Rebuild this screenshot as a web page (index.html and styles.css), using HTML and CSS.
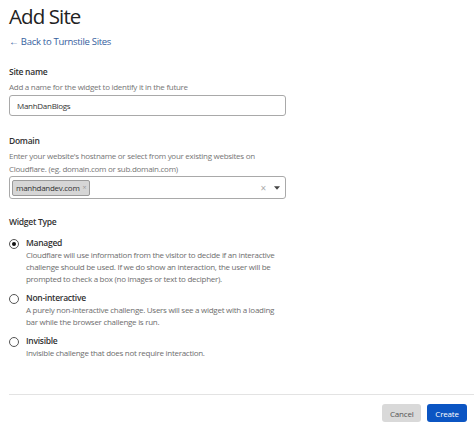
FILE: index.html
```html
<!DOCTYPE html>
<html>
<head>
<meta charset="utf-8">
<link rel="stylesheet" href="styles.css">
</head>
<body>
<div class="page">
  <h1 class="title">Add Site</h1>
  <a class="back" href="#"><span class="arrow">&larr;</span> Back to Turnstile Sites</a>

  <div class="field field-name">
    <div class="label">Site name</div>
    <div class="help">Add a name for the widget to identify it in the future</div>
    <div class="input">ManhDanBlogs</div>
  </div>

  <div class="field field-domain">
    <div class="label">Domain</div>
    <div class="help">Enter your website's hostname or select from your existing websites on<br>Cloudflare. (eg. domain.com or sub.domain.com)</div>
    <div class="select">
      <span class="tag">manhdandev.com <span class="tag-x">&times;</span></span>
      <span class="spacer"></span>
      <span class="clear">&times;</span>
      <svg class="caret" width="6" height="4" viewBox="0 0 6 4"><path d="M0 0.3 L6 0.3 L3 3.7 Z" fill="#444"/></svg>
    </div>
  </div>

  <div class="field field-type">
    <div class="label">Widget Type</div>
    <div class="option">
      <span class="radio checked"></span>
      <div class="opt-body">
        <div class="opt-title">Managed</div>
        <div class="opt-desc">Cloudflare will use information from the visitor to decide if an interactive<br>challenge should be used. If we do show an interaction, the user will be<br>prompted to check a box (no images or text to decipher).</div>
      </div>
    </div>
    <div class="option">
      <span class="radio"></span>
      <div class="opt-body">
        <div class="opt-title">Non-interactive</div>
        <div class="opt-desc">A purely non-interactive challenge. Users will see a widget with a loading<br>bar while the browser challenge is run.</div>
      </div>
    </div>
    <div class="option">
      <span class="radio"></span>
      <div class="opt-body">
        <div class="opt-title">Invisible</div>
        <div class="opt-desc">Invisible challenge that does not require interaction.</div>
      </div>
    </div>
  </div>

  <div class="footer">
    <button class="btn cancel">Cancel</button>
    <button class="btn create">Create</button>
  </div>
</div>
</body>
</html>
```

FILE: styles.css
```css
html, body {
  margin: 0;
  padding: 0;
  background: #ffffff;
}
body {
  font-family: "Open Sans", "Noto Sans", sans-serif;
  color: #313131;
  font-size: 8px;
  letter-spacing: -0.28px;
}
.page {
  padding: 0 0 0 9px;
}
.title {
  margin: 0;
  padding-top: 3px;
  font-size: 20.5px;
  font-weight: 400;
  line-height: 26px;
  color: #222;
  letter-spacing: -0.9px;
}
.back {
  display: block;
  margin-top: 6px;
  font-size: 9.5px;
  line-height: 13px;
  color: #35609e;
  text-decoration: none;
  letter-spacing: -0.3px;
}
.arrow {
  font-size: 10px;
}
.field {
  padding-right: 188px;
}
.field-name {
  margin-top: 18px;
}
.label {
  font-size: 8.5px;
  font-weight: 600;
  line-height: 12px;
  color: #313131;
}
.help {
  margin-top: 2px;
  font-size: 8px;
  line-height: 13px;
  color: #767676;
}
.input {
  margin-top: 2px;
  height: 19px;
  border: 1px solid #a9a9a9;
  border-radius: 3px;
  padding: 0 7px;
  line-height: 19px;
  font-size: 8px;
  color: #333;
}
.field-domain {
  margin-top: 19px;
}
.select {
  margin-top: 1px;
  height: 21px;
  border: 1px solid #a9a9a9;
  border-radius: 3px;
  display: flex;
  align-items: center;
  padding: 0 5px 0 2px;
}
.tag {
  display: flex;
  align-items: center;
  height: 14px;
  padding: 0 3px 0 3px;
  background: #d6d6d6;
  border: 1px solid #9a9a9a;
  border-radius: 2px;
  font-size: 8px;
  color: #333;
  gap: 3px;
}
.tag-x {
  color: #999;
  font-size: 7px;
}
.spacer {
  flex: 1;
}
.clear {
  color: #aaa;
  font-size: 10px;
  margin-right: 8px;
}
.caret {
  display: block;
}
.field-type {
  margin-top: 17px;
  padding-right: 0;
}
.option {
  display: flex;
  margin-top: 7px;
}
.field-type .label + .option {
  margin-top: 9px;
}
.radio {
  flex: none;
  width: 8px;
  height: 8px;
  border: 1px solid #555;
  border-radius: 50%;
  margin: 2px 0 0 0;
  position: relative;
  box-sizing: content-box;
}
.radio.checked::after {
  content: "";
  position: absolute;
  left: 2px;
  top: 2px;
  width: 4px;
  height: 4px;
  border-radius: 50%;
  background: #111;
}
.opt-body {
  margin-left: 7px;
}
.opt-title {
  font-size: 8.5px;
  font-weight: 600;
  line-height: 12px;
  color: #313131;
}
.opt-desc {
  font-size: 8px;
  line-height: 12px;
  color: #6e6e6e;
}
.footer {
  margin-top: 35px;
  border-top: 1px solid #e3e3e3;
  padding: 9px 7px 0 0;
  display: flex;
  justify-content: flex-end;
  gap: 6px;
}
.btn {
  font-family: "Open Sans", "Noto Sans", sans-serif;
  font-size: 8px;
  letter-spacing: -0.2px;
  height: 18px;
  border: none;
  border-radius: 3px;
  padding: 0 8px;
  cursor: pointer;
}
.cancel {
  background: #d9d9d9;
  color: #555;
  width: 39px;
}
.create {
  background: #0b55c3;
  color: #fff;
  width: 40px;
}
```
